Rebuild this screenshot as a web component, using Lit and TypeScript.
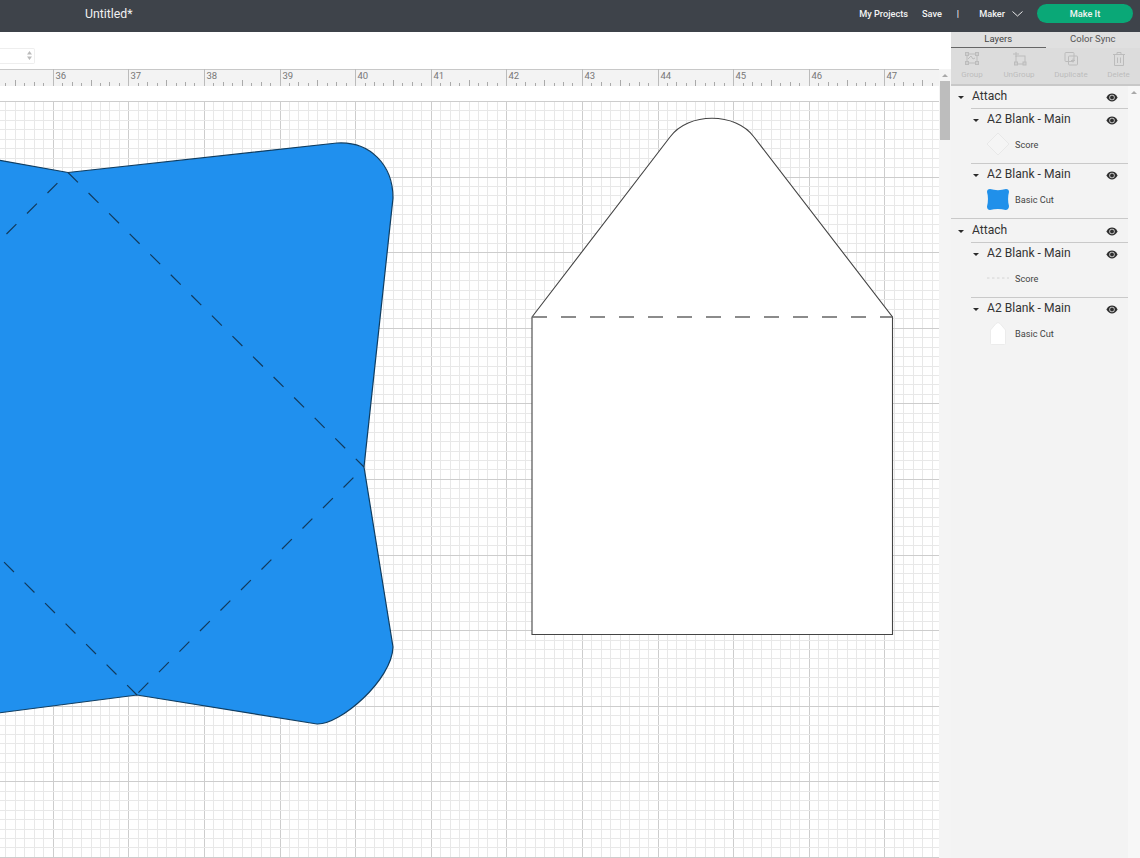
import { LitElement, html, css, svg } from "lit";
import { customElement } from "lit/decorators.js";

const STEP = 75.6;
const MINOR = STEP / 8;
const X0 = 52.7 - STEP;
const Y0 = 100.9;

const eye = html`<svg class="eye" viewBox="0 0 12 9" width="12" height="9">
  <path d="M0.4 4.5C2 1.6 4 .6 6 .6s4 1 5.6 3.9C10 7.4 8 8.4 6 8.4S2 7.4.4 4.5Z" fill="#2e2e2e"/>
  <circle cx="6" cy="4.5" r="2.7" fill="#d8d8d8"/><circle cx="6" cy="4.5" r="1.9" fill="#2e2e2e"/>
</svg>`;

const thumbs: Record<string, unknown> = {
  diamond: html`<svg viewBox="0 0 26 26" width="26" height="26"><path d="M13 2 24 13 13 24 2 13Z" fill="#f5f5f5" stroke="#e8e8e8"/></svg>`,
  blue: html`<svg viewBox="0 0 26 26" width="26" height="26"><path d="M5 3C10 4.500 16 4.500 21 3 23 3 24 4 24 6 22.800 10 22.800 16 24 20 24 22.500 22.500 24 20.500 24 16 22.800 10 22.800 5 24 3 24 2 22.500 2 20.500 3.300 16 3.300 10 2 6 2 4 3 3 5 3Z" fill="#2090ea"/></svg>`,
  dashes: html`<svg viewBox="0 0 26 26" width="26" height="26"><path d="M2 13H24" stroke="#d4d4d4" stroke-dasharray="2.500 2.500"/></svg>`,
  house: html`<svg viewBox="0 0 26 26" width="26" height="26"><path d="M5.500 10 11 3.500Q13 1.500 15 3.500L20.500 10V23.500Q20.500 24.500 19.500 24.500H6.500Q5.500 24.500 5.500 23.500Z" fill="#fff" stroke="#ececec"/></svg>`,
};

const tools = [
  { label: "Group", width: 42, icon: svg`<rect x="3" y="3" width="10" height="9" fill="none"/><rect x="1.500" y="1.500" width="3" height="3"/><rect x="11.500" y="1.500" width="3" height="3"/><rect x="1.500" y="10.500" width="3" height="3"/><rect x="11.500" y="10.500" width="3" height="3"/><path d="M4 8l3-3 2 3 2-1" fill="none"/>` },
  { label: "UnGroup", width: 52, icon: svg`<rect x="5" y="5" width="9" height="8" fill="none"/><path d="M2 3H8M5 1V6"/><rect x="12" y="11" width="3" height="3"/><rect x="3.500" y="11" width="3" height="3"/>` },
  { label: "Duplicate", width: 52, icon: svg`<rect x="2" y="1.500" width="9" height="9" rx="1" fill="none"/><rect x="5.500" y="5" width="9" height="9" rx="1" fill="none"/><path d="M8 9.500H12M10 7.500V11.500"/>` },
  { label: "Delete", width: 43, icon: svg`<path d="M2 3.500H14M6 3.500V1.500H10V3.500M3.500 3.500V14.500H12.500V3.500M6.500 6.500V12M9.500 6.500V12" fill="none"/>` },
];

type Leaf = { name: string; thumb: string };
const groups: { sub: Leaf[]; last?: boolean }[] = [
  { sub: [{ name: "Score", thumb: "diamond" }, { name: "Basic Cut", thumb: "blue" }] },
  { sub: [{ name: "Score", thumb: "dashes" }, { name: "Basic Cut", thumb: "house" }], last: true },
];

@customElement("app-root")
export class AppRoot extends LitElement {
  static styles = css`
    :host { display: block; width: 1140px; height: 858px; overflow: hidden; font-family: Roboto, "Liberation Sans", sans-serif; background: #fff; }
    .header { height: 32px; box-sizing: border-box; background: #3e434a; color: #fff; display: flex; align-items: center; padding: 0 7px 5px 85px; }
    .title { font-size: 12.300px; font-weight: 400; flex: 1; color: #f1f1f1; }
    .nav { font-size: 9.200px; font-weight: 500; color: #f4f4f4; }
    .projects { margin-right: 14px; }
    .save { margin-right: 15px; }
    .bar { margin-right: 20px; }
    .maker { margin-right: 7px; }
    .chev { margin-right: 14px; }
    .make { width: 96px; height: 19px; border-radius: 10px; background: #0aa877; display: flex; align-items: center; justify-content: center; font-size: 9.200px; font-weight: 500; color: #f4f4f4; }
    .body { display: flex; height: 826px; }
    .main { width: 951px; display: flex; flex-direction: column; }
    .options { height: 37px; display: flex; align-items: center; flex: none; }
    .spinner { width: 35px; height: 16px; box-sizing: border-box; margin-top: 10px; border: 1px solid #eee; border-left: none; border-radius: 0 2px 2px 0; display: flex; align-items: center; justify-content: space-between; padding-right: 2px; font-size: 8px; color: #ddd; }
    .work { flex: 1; display: flex; min-height: 0; }
    .canvas-col { width: 939px; display: flex; flex-direction: column; }
    .ruler { width: 939px; height: 17px; display: block; flex: none; }
    .gap { height: 15px; flex: none; }
    .canvas { width: 939px; flex: 1; display: block; }
    .vscroll { width: 12px; flex: none; background: #f4f4f4; display: flex; flex-direction: column; align-items: center; }
    .up { width: 0; height: 0; border-left: 3px solid transparent; border-right: 3px solid transparent; border-bottom: 3px solid #a8a8a8; margin-top: 5px; }
    .thumb { width: 10px; height: 59px; background: #bdbdbd; margin-top: 4px; }
    .side { width: 189px; flex: none; display: flex; flex-direction: column; background: #f3f3f3; }
    .tabs { display: flex; height: 16px; background: #e0e0e0; flex: none; }
    .tab { flex: 1; text-align: center; font-size: 9.500px; line-height: 14px; color: #555; box-sizing: border-box; }
    .tab.active { border-bottom: 1px solid #666; color: #444; }
    .tools { height: 38px; box-sizing: border-box; background: #dcdcdc; border-bottom: 2px solid #c8c8c8; display: flex; flex: none; padding: 3px 0 0 0; }
    .tool { display: flex; flex-direction: column; align-items: center; gap: 3px; font-size: 8px; color: #bdbdbd; }
    .tool svg { stroke: #bcbcbc; fill: #cfcfcf; stroke-width: 1; }
    .panel { flex: 1; display: flex; }
    .list { width: 177px; }
    .rail { width: 12px; background: #f7f7f7; display: flex; justify-content: center; align-items: flex-start; }
    .row { display: flex; align-items: center; box-sizing: border-box; color: #333; }
    .attach { height: 22px; padding-left: 7px; }
    .sub { height: 22px; padding-left: 22px; }
    .caret { width: 0; height: 0; border-left: 3px solid transparent; border-right: 3px solid transparent; border-top: 3px solid #2b2b2b; margin-right: 8px; }
    .name { flex: 1; font-size: 12.100px; margin-bottom: 2px; }
    .eye { margin-right: 10px; flex: none; }
    .rule { height: 1px; background: #c9c9c9; margin-left: 20px; }
    .rule.full { margin-left: 0; margin-bottom: 1px; }
    .leaf { height: 32px; padding: 0 0 6px 34px; font-size: 9.200px; color: #444; gap: 4px; }
    .leaf svg { flex: none; }
  `;

  private gridLines() {
    const out: unknown[] = [];
    for (let i = 0; i < 110; i++) {
      const x = Math.round(X0 + i * MINOR) + 0.5;
      const major = i % 8 === 0;
      if (x < 939) out.push(svg`<path d="M${x} 101V858" stroke=${major ? "#cdcdcd" : "#e8e8e8"}/>`);
    }
    for (let i = 0; i < 82; i++) {
      const y = Math.round(Y0 + i * MINOR) + 0.5;
      const major = i % 8 === 0;
      out.push(svg`<path d="M0 ${y}H939" stroke=${major ? "#cdcdcd" : "#e8e8e8"}/>`);
    }
    return out;
  }

  private rulerMarks() {
    const out: unknown[] = [];
    for (let i = 8; i < 110; i++) {
      const x = Math.round(X0 + i * MINOR) + 0.5;
      if (x > 939) break;
      const k = i % 8;
      const h = k === 0 ? 17 : k === 4 ? 6 : k % 2 === 0 ? 4 : 3;
      out.push(svg`<path d="M${x} ${17 - h}V17" stroke=${k === 0 ? "#bbb" : "#aaa"}/>`);
      if (k === 0) out.push(svg`<text x=${x + 2} y="10" font-size="9.500" fill="#777">${35 + i / 8}</text>`);
    }
    for (let i = 1; i < 8; i++) {
      const x = Math.round(X0 + i * MINOR) + 0.5;
      if (x > 0) out.push(svg`<path d="M${x} ${i === 4 ? 11 : i % 2 === 0 ? 13 : 14}V17" stroke="#aaa"/>`);
    }
    return out;
  }

  private group(g: { sub: Leaf[]; last?: boolean }) {
    return html`
      <div class="row attach"><span class="caret"></span><span class="name">Attach</span>${eye}</div>
      <div class="rule"></div>
      ${g.sub.map((l, i) => html`
        <div class="row sub"><span class="caret"></span><span class="name">A2 Blank - Main</span>${eye}</div>
        <div class="row leaf">${thumbs[l.thumb]}<span>${l.name}</span></div>
        ${i === 0 ? html`<div class="rule"></div>` : g.last ? "" : html`<div class="rule full"></div>`}
      `)}
    `;
  }

  render() {
    return html`
      <div class="header">
        <span class="title">Untitled*</span>
        <span class="nav projects">My Projects</span>
        <span class="nav save">Save</span>
        <span class="nav bar">|</span>
        <span class="nav maker">Maker</span>
        <svg class="chev" width="11" height="6" viewBox="0 0 11 6"><path d="M.5.5 5.500 5 10.500.5" fill="none" stroke="#e8e8e8"/></svg>
        <span class="make">Make It</span>
      </div>
      <div class="body">
        <div class="main">
          <div class="options">
            <div class="spinner"><span></span>
              <svg width="5" height="9" viewBox="0 0 5 9"><path d="M2.500 0 5 3.500H0ZM0 5.500H5L2.500 9Z" fill="#bbb"/></svg>
            </div>
          </div>
          <div class="work">
            <div class="canvas-col">
              <svg class="ruler" viewBox="0 0 939 17">
                <rect width="939" height="17" fill="#f3f3f3"/>
                <path d="M0 .5H939" stroke="#c8c8c8"/>
                ${this.rulerMarks()}
              </svg>
              <div class="gap"></div>
              <svg class="canvas" viewBox="0 101 939 757">
                ${this.gridLines()}
                <path d="M-2 160 68 172.500 337 143C370 141 393 165 393 198L364 467 393 647C392 680 340 725 317 724L137 695-2 713Z" fill="#2090ee" stroke="#0f3d61" stroke-width="1.200"/>
                <g stroke="#123a5c" stroke-width="1.200" fill="none" stroke-dasharray="14 15">
                  <path d="M68 172.500 364 467"/>
                  <path d="M68 172.500-4 244.500" stroke-dashoffset="14"/>
                  <path d="M137 695-4 554"/>
                  <path d="M364 467 137 694" stroke-dashoffset="14"/>
                </g>
                <path d="M532 317 670 137C688 112 736 112 754 137L892.500 317V634.500H532Z" fill="#fff" stroke="#444" stroke-width="1.100"/>
                <path d="M532 317H892.500" fill="none" stroke="#666" stroke-width="1.300" stroke-dasharray="15 14"/>
              </svg>
            </div>
            <div class="vscroll"><div class="up"></div><div class="thumb"></div></div>
          </div>
        </div>
        <div class="side">
          <div class="tabs">
            <div class="tab active">Layers</div>
            <div class="tab">Color Sync</div>
          </div>
          <div class="tools">
            ${tools.map((t) => html`<div class="tool" style="width:${t.width}px"><svg width="16" height="16" viewBox="0 0 16 16">${t.icon}</svg><span>${t.label}</span></div>`)}
          </div>
          <div class="panel">
            <div class="list">${groups.map((g) => this.group(g))}</div>
            <div class="rail"><div class="up"></div></div>
          </div>
        </div>
      </div>
    `;
  }
}
